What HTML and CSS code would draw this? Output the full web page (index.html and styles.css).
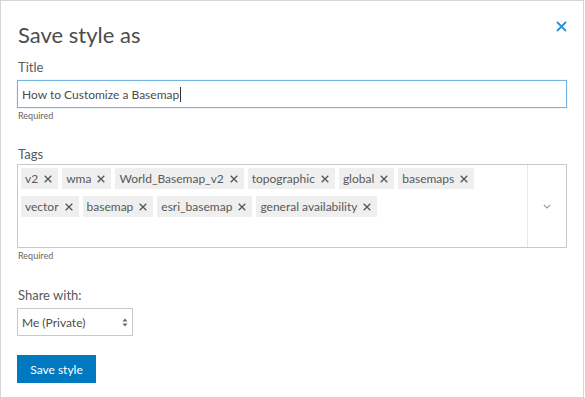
FILE: index.html
```html
<!DOCTYPE html>
<html lang="en">
<head>
    <meta charset="UTF-8">
    <meta name="viewport" content="width=device-width, initial-scale=1.0">
    <title>Save style as</title>
    <link rel="stylesheet" href="styles.css">
</head>
<body>

    <div class="dialog">
        <div class="dialog-header">
            <h1 class="dialog-title">Save style as</h1>
            <button class="close-btn" aria-label="Close">
                <svg width="11" height="11" viewBox="0 0 11 11"><path d="M1 1L10 10M10 1L1 10" stroke="#2f8fd6" stroke-width="1.8" fill="none"/></svg>
            </button>
        </div>

        <label class="field-label label-title">Title</label>
        <div class="text-input">How to Customize a Basemap<span class="caret"></span></div>
        <div class="hint">Required</div>

        <label class="field-label label-tags">Tags</label>
        <div class="tags-box">
            <div class="tag-list">
                <span class="tag">v2<i class="tag-x"></i></span>
                <span class="tag">wma<i class="tag-x"></i></span>
                <span class="tag">World_Basemap_v2<i class="tag-x"></i></span>
                <span class="tag">topographic<i class="tag-x"></i></span>
                <span class="tag">global<i class="tag-x"></i></span>
                <span class="tag">basemaps<i class="tag-x"></i></span>
                <span class="tag">vector<i class="tag-x"></i></span>
                <span class="tag">basemap<i class="tag-x"></i></span>
                <span class="tag">esri_basemap<i class="tag-x"></i></span>
                <span class="tag">general availability<i class="tag-x"></i></span>
            </div>
            <div class="tags-toggle">
                <svg width="8" height="5" viewBox="0 0 8 5"><path d="M0.8 0.8L4 4L7.2 0.8" stroke="#999" stroke-width="1.1" fill="none"/></svg>
            </div>
        </div>
        <div class="hint">Required</div>

        <label class="field-label label-share">Share with:</label>
        <div class="select">
            <span>Me (Private)</span>
            <svg width="6" height="9" viewBox="0 0 6 9"><path d="M0.5 3.5L3 0.5L5.5 3.5Z M0.5 5.5L3 8.5L5.5 5.5Z" fill="#666"/></svg>
        </div>

        <button class="btn-save">Save style</button>
    </div>

    <script>
        // tag remove icons
        document.querySelectorAll('.tag-x').forEach(x => {
            x.innerHTML = '<svg width="8" height="8" viewBox="0 0 8 8"><path d="M0.7 0.7L7.3 7.3M7.3 0.7L0.7 7.3" stroke="#555" stroke-width="1.3" fill="none"/></svg>';
        });
    </script>

</body>
</html>
```

FILE: styles.css
```css
body {
    margin: 0;
    background: white;
    font-family: Lato, "Noto Sans", sans-serif;
    color: #595959;
}
.dialog {
    width: 584px;
    box-sizing: border-box;
    border: 1px solid #d6d6d6;
    padding: 21px 16px 14px 16px;
    display: flex;
    flex-direction: column;
    align-items: flex-start;
}
.dialog-header {
    align-self: stretch;
    display: flex;
    justify-content: space-between;
    align-items: center;
}
.dialog-title {
    margin: 0;
    font-size: 22px;
    line-height: 26px;
    font-weight: normal;
    color: #4c4c4c;
    padding-left: 1px;
}
.close-btn {
    border: none;
    background: none;
    padding: 0;
    margin-right: 0;
    margin-top: -18px;
    display: flex;
    cursor: pointer;
}
.field-label {
    font-size: 13px;
    line-height: 16px;
    padding-left: 1px;
}
.label-title { margin-top: 11px; }
.label-tags { margin-top: 24px; }
.label-share { margin-top: 25px; }

.text-input {
    align-self: stretch;
    margin-top: 5px;
    height: 28px;
    box-sizing: border-box;
    border: 1px solid #74b4e4;
    box-shadow: 0 0 1px #9fcbed;
    padding: 0 4px;
    font-size: 12px;
    display: flex;
    align-items: center;
    color: #4c4c4c;
}
.caret {
    display: inline-block;
    width: 1px;
    height: 15px;
    background: #333;
    margin-left: 1px;
}
.hint {
    margin-top: 2px;
    font-size: 9px;
    line-height: 12px;
    color: #666;
    padding-left: 1px;
}

.tags-box {
    align-self: stretch;
    margin-top: 2px;
    height: 84px;
    box-sizing: border-box;
    border: 1px solid #c8c8c8;
    display: flex;
}
.tag-list {
    flex: 1;
    display: flex;
    flex-wrap: wrap;
    align-content: flex-start;
    gap: 7px 4px;
    padding: 3px 3px;
}
.tag {
    height: 21px;
    display: flex;
    align-items: center;
    background: #efefef;
    font-size: 12px;
    padding: 0 6px 0 4px;
    color: #595959;
}
.tag-x {
    display: flex;
    margin-left: 6px;
}
.tags-toggle {
    width: 38px;
    border-left: 1px solid #e8e8e8;
    display: flex;
    align-items: center;
    justify-content: center;
}

.select {
    margin-top: 5px;
    width: 116px;
    height: 28px;
    box-sizing: border-box;
    border: 1px solid #c8c8c8;
    padding: 0 4px 0 4px;
    display: flex;
    align-items: center;
    justify-content: space-between;
    font-size: 12px;
    color: #4c4c4c;
}
.btn-save {
    margin-top: 19px;
    height: 28px;
    width: 79px;
    border: none;
    background: #0079c1;
    color: white;
    font-family: Lato, "Noto Sans", sans-serif;
    font-size: 12px;
    padding: 0;
    cursor: pointer;
}
```
